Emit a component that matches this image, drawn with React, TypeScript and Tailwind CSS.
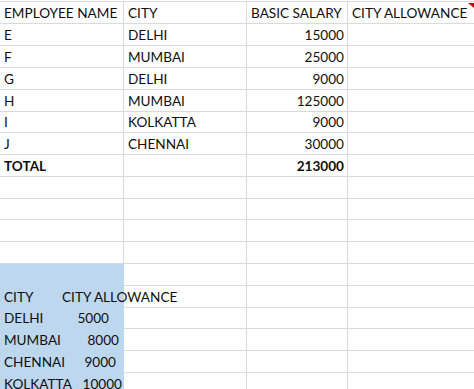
import React from "react";

type Cell = { text?: React.ReactNode; align?: "left" | "right"; bold?: boolean; blue?: boolean; overflow?: boolean };

const heights = [22, 22, 22, 22, 22, 21, 22, 22, 22, 21, 22, 22, 22, 22, 21, 22, 22, 22];

const widths = ["w-[124px]", "w-[123px]", "w-[101px]", "flex-1"];

function Pair({ a, b, w }: { a: string; b: string; w: string }) {
  return (
    <span className={`flex justify-between ${w}`}>
      <span>{a}</span>
      <span>{b}</span>
    </span>
  );
}

const rows: Cell[][] = [
  [{ text: "EMPLOYEE NAME" }, { text: "CITY" }, { text: "BASIC SALARY" }, { text: "CITY ALLOWANCE" }],
  [{ text: "E" }, { text: "DELHI" }, { text: "15000", align: "right" }, {}],
  [{ text: "F" }, { text: "MUMBAI" }, { text: "25000", align: "right" }, {}],
  [{ text: "G" }, { text: "DELHI" }, { text: "9000", align: "right" }, {}],
  [{ text: "H" }, { text: "MUMBAI" }, { text: "125000", align: "right" }, {}],
  [{ text: "I" }, { text: "KOLKATTA" }, { text: "9000", align: "right" }, {}],
  [{ text: "J" }, { text: "CHENNAI" }, { text: "30000", align: "right" }, {}],
  [{ text: "TOTAL", bold: true }, {}, { text: "213000", align: "right", bold: true }, {}],
  [{}, {}, {}, {}],
  [{}, {}, {}, {}],
  [{}, {}, {}, {}],
  [{}, {}, {}, {}],
  [{ blue: true }, {}, {}, {}],
  [
    {
      blue: true,
      overflow: true,
      text: (
        <span className="flex">
          <span className="w-[58px]">CITY</span>
          <span>CITY ALLOWANCE</span>
        </span>
      ),
    },
    {},
    {},
    {},
  ],
  [{ blue: true, text: <Pair a="DELHI" b="5000" w="w-[105px]" /> }, {}, {}, {}],
  [{ blue: true, text: <Pair a="MUMBAI" b="8000" w="w-[115px]" /> }, {}, {}, {}],
  [{ blue: true, text: <Pair a="CHENNAI" b="9000" w="w-[112px]" /> }, {}, {}, {}],
  [{ blue: true, text: <Pair a="KOLKATTA" b="10000" w="w-[118px]" /> }, {}, {}, {}],
];

export default function App() {
  return (
    <div
      className="w-[474px] h-[389px] overflow-hidden bg-white text-[13.6px] text-[#0f0f0f]"
      style={{ fontFamily: 'Lato, "Liberation Sans", Arial, sans-serif' }}
    >
      <div className="h-[1px] bg-white" />
      {rows.map((row, ri) => (
        <div key={ri} className="flex" style={{ height: heights[ri] }}>
          {row.map((c, ci) => {
            const blueCell = !!c.blue;
            const borderT = blueCell && ri > 12 ? "border-t-[#bdd7ee]" : "border-t-[#dadada]";
            const borderR = blueCell ? "border-r-[#bdd7ee]" : "border-r-[#dadada]";
            const hideR = ri === 13 && ci === 0;
            return (
              <div
                key={ci}
                className={`${widths[ci]} relative shrink-0 border-t ${borderT} ${
                  ci < 3 ? `border-r ${borderR}` : ""
                } ${blueCell ? "bg-[#bdd7ee]" : ""} flex items-end pb-[2px] whitespace-nowrap ${
                  c.align === "right" ? "justify-end pr-[3px]" : "pl-[4px]"
                } ${c.bold ? "font-bold" : ""} ${c.overflow || hideR ? "overflow-visible z-10" : "overflow-hidden"} leading-[16px]`}
              >
                {c.text}
                {ri === 0 && ci === 3 && (
                  <span className="absolute right-0 top-[1px] w-0 h-0 border-l-[6px] border-l-transparent border-t-[5px] border-t-[#d00000]" />
                )}
              </div>
            );
          })}
        </div>
      ))}
    </div>
  );
}
